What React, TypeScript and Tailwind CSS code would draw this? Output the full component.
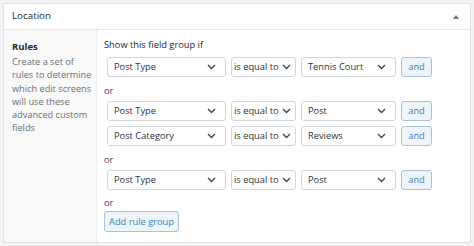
import React from "react";

function Chevron() {
  return (
    <svg width="9" height="6" viewBox="0 0 9 6" className="shrink-0">
      <path d="M1 1l3.5 3.5L8 1" fill="none" stroke="#3c434a" strokeWidth="1.3" />
    </svg>
  );
}

function Select({ label, width, pad = "pl-[6px] pr-[9px]" }: { label: string; width: string; pad?: string }) {
  return (
    <div
      className={`flex h-[20px] items-center justify-between rounded-[3px] border border-[#d3d6da] bg-white ${pad} ${width}`}
    >
      <span className="whitespace-nowrap">{label}</span>
      <Chevron />
    </div>
  );
}

function AndButton() {
  return (
    <div className="flex h-[20px] w-[31px] items-center justify-center rounded-[3px] border border-[#a9c3d6] bg-[#eef4f7] text-[#3a84b8]">
      and
    </div>
  );
}

function Rule({ param, value }: { param: string; value: string }) {
  return (
    <div className="flex gap-[5px] pl-[3px]">
      <Select label={param} width="w-[119px]" pad="pl-[6px] pr-[9px]" />
      <Select label="is equal to" width="w-[65px]" pad="pl-[2px] pr-[4px]" />
      <Select label={value} width="w-[95px]" pad="pl-[6px] pr-[9px]" />
      <AndButton />
    </div>
  );
}

function Or() {
  return <div className="h-[16px] leading-[16px] text-[#3c434a]">or</div>;
}

const descLines = ["Create a set of", "rules to determine", "which edit screens", "will use these", "advanced custom", "fields"];

export default function App() {
  return (
    <div
      className="h-[246px] w-[474px] bg-[#f3f3f3] pl-[3px] pt-[3px] text-[9.3px] text-[#2c3338]"
      style={{ fontFamily: '"Open Sans", "Noto Sans", sans-serif' }}
    >
      <div className="flex h-[240px] w-[468px] flex-col border border-[#e0e2e5] bg-white">
        <div className="flex h-[26px] shrink-0 items-center justify-between border-b border-[#e6e8ea] pl-[8px] pr-[11px]">
          <span className="text-[9.8px] text-[#23282d]">Location</span>
          <svg width="6" height="4" viewBox="0 0 6 4">
            <path d="M0 4L3 0L6 4Z" fill="#72777c" />
          </svg>
        </div>
        <div className="flex flex-1">
          <div className="w-[93px] shrink-0 border-r border-[#ececec] bg-[#f9f9f9] pl-[8px] pt-[10px]">
            <div className="text-[9.5px] font-bold leading-[14px] text-[#23282d]">Rules</div>
            <div className="mt-[1px] text-[9.2px] leading-[13.3px] text-[#6b7075]">
              {descLines.map((l) => (
                <div key={l} className="whitespace-nowrap">
                  {l}
                </div>
              ))}
            </div>
          </div>
          <div className="flex flex-1 flex-col pl-[7px] pt-[7px]">
            <div className="h-[16px] leading-[16px] text-[#23282d]">Show this field group if</div>
            <div className="mt-[4px]">
              <Rule param="Post Type" value="Tennis Court" />
            </div>
            <div className="mt-[6px]">
              <Or />
            </div>
            <div className="mt-[2px] flex flex-col gap-[5px]">
              <Rule param="Post Type" value="Post" />
              <Rule param="Post Category" value="Reviews" />
            </div>
            <div className="mt-[6px]">
              <Or />
            </div>
            <div className="mt-[2px]">
              <Rule param="Post Type" value="Post" />
            </div>
            <div className="mt-[5px]">
              <Or />
            </div>
            <div className="flex h-[21px] w-[75px] items-center justify-center whitespace-nowrap rounded-[3px] border border-[#a9c3d6] bg-[#eef4f7] text-[#3a84b8]">
              Add rule group
            </div>
          </div>
        </div>
      </div>
    </div>
  );
}
